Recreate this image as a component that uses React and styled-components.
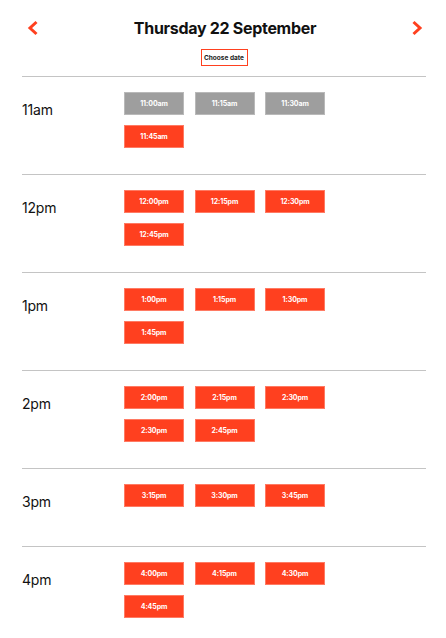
import React from "react";
import styled, { createGlobalStyle } from "styled-components";

const Global = createGlobalStyle`
  html, body { margin: 0; padding: 0; background: #fff; }
  body { font-family: Inter, "Liberation Sans", sans-serif; color: #111; }
`;

const ORANGE = "#ff401f";

const Page = styled.div`
  padding: 0 20px 0 22px;
  width: 446px;
  box-sizing: border-box;
`;

const Header = styled.header`
  display: flex;
  align-items: center;
  justify-content: space-between;
  height: 56px;
  padding: 0 3px 0 5px;
`;

const NavButton = styled.button`
  border: 0;
  background: none;
  padding: 0;
  width: 12px;
  height: 16px;
  display: flex;
  align-items: center;
  justify-content: center;
  cursor: pointer;
`;

const Title = styled.h1`
  margin: 0;
  font-size: 16px;
  font-weight: 700;
  letter-spacing: -0.3px;
  color: #111;
`;

const ChooseRow = styled.div`
  display: flex;
  justify-content: center;
  padding-bottom: 10px;
  margin-top: -7px;
`;

const ChooseButton = styled.button`
  font-family: Inter, "Liberation Sans", sans-serif;
  font-size: 6.5px;
  font-weight: 700;
  color: #222;
  background: #fff;
  border: 1px solid ${ORANGE};
  width: 47px;
  height: 17px;
  padding: 0;
`;

const Section = styled.section`
  display: flex;
  border-top: 1px solid #c4c4c4;
  padding: 15px 0 26px;
`;

const HourLabel = styled.div`
  width: 102px;
  flex: none;
  font-size: 14px;
  line-height: 36px;
  letter-spacing: -0.2px;
  color: #111;
`;

const Slots = styled.div`
  display: grid;
  grid-template-columns: repeat(3, 60px);
  column-gap: 10.5px;
  row-gap: 10px;
  align-content: start;
`;

const Slot = styled.button`
  height: 23px;
  padding: 0;
  border: 1px solid ${(p) => (p.$disabled ? "#b9b9b9" : "#ff7a63")};
  background: ${(p) => (p.$disabled ? "#9e9e9e" : ORANGE)};
  color: #fff;
  font-family: Inter, "Liberation Sans", sans-serif;
  font-size: 7px;
  font-weight: 700;
  letter-spacing: -0.1px;
`;

const Chevron = ({ dir }) => (
  <svg width="12" height="16" viewBox="0 0 12 16">
    <path
      d={dir === "left" ? "M9.5 2 L3 8 L9.5 14" : "M2.5 2 L9 8 L2.5 14"}
      fill="none"
      stroke={ORANGE}
      strokeWidth="3"
      strokeLinecap="butt"
      strokeLinejoin="miter"
    />
  </svg>
);

const hours = [
  { label: "11am", slots: [["11:00am", true], ["11:15am", true], ["11:30am", true], ["11:45am"]] },
  { label: "12pm", slots: [["12:00pm"], ["12:15pm"], ["12:30pm"], ["12:45pm"]] },
  { label: "1pm", slots: [["1:00pm"], ["1:15pm"], ["1:30pm"], ["1:45pm"]] },
  { label: "2pm", slots: [["2:00pm"], ["2:15pm"], ["2:30pm"], ["2:30pm"], ["2:45pm"]] },
  { label: "3pm", slots: [["3:15pm"], ["3:30pm"], ["3:45pm"]] },
  { label: "4pm", slots: [["4:00pm"], ["4:15pm"], ["4:30pm"], ["4:45pm"]] },
];

export default function App() {
  return (
    <>
      <Global />
      <Page>
        <Header>
          <NavButton aria-label="Previous day"><Chevron dir="left" /></NavButton>
          <Title>Thursday 22 September</Title>
          <NavButton aria-label="Next day"><Chevron dir="right" /></NavButton>
        </Header>
        <ChooseRow>
          <ChooseButton>Choose date</ChooseButton>
        </ChooseRow>
        {hours.map((h) => (
          <Section key={h.label}>
            <HourLabel>{h.label}</HourLabel>
            <Slots>
              {h.slots.map(([t, d], i) => (
                <Slot key={i} $disabled={!!d}>{t}</Slot>
              ))}
            </Slots>
          </Section>
        ))}
      </Page>
    </>
  );
}
